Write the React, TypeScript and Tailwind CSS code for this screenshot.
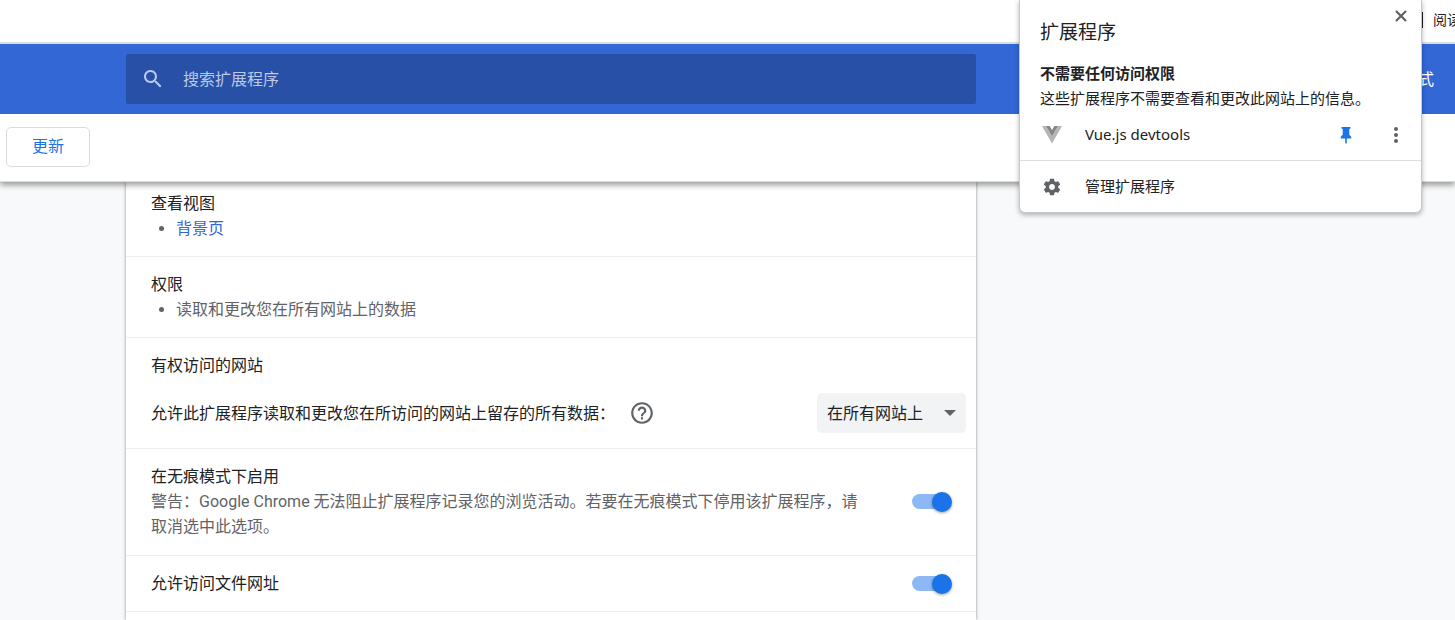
import { useState } from "react";
import type { ReactNode } from "react";

interface SectionProps {
  title?: string;
  children?: ReactNode;
  className?: string;
}
function Section(props: SectionProps) {
  return (
    <section className={`border-b border-[#eeeeee] px-[25px] pb-[15px] ${props.className ?? "pt-[15px]"}`}>
      {props.title && <h2 className="text-[#202124]">{props.title}</h2>}
      {props.children}
    </section>
  );
}

interface ToggleProps {
  id: string;
  checked: boolean;
  onChange: (value: boolean) => void;
}
function Toggle(props: ToggleProps) {
  return (
    <input
      id={props.id}
      type="checkbox"
      checked={props.checked}
      onChange={(e) => props.onChange(e.target.checked)}
      className="relative h-5 w-10 shrink-0 cursor-pointer appearance-none before:absolute before:top-[2px] before:left-0 before:h-[15px] before:w-9 before:rounded-full before:bg-[#bdc1c6] checked:before:bg-[#8cb8f5] after:absolute after:top-0 after:left-0 after:size-5 after:rounded-full after:bg-white after:shadow-[0_1px_3px_rgba(0,0,0,0.4)] checked:after:left-5 checked:after:bg-[#1a73e8]"
    />
  );
}

function VueIcon() {
  return (
    <svg className="h-5 w-5" viewBox="0 0 20 20" aria-hidden="true">
      <path d="M0 1h4l6 10.300L16 1h4L10 18.500z" fill="#b5b5b5" />
      <path d="M4 1h3.700L10 5l2.300-4H16l-6 10.300z" fill="#878787" />
    </svg>
  );
}

function PinIcon() {
  return (
    <svg className="h-5 w-5" viewBox="0 0 20 20" fill="#1a73e8" aria-hidden="true">
      <path d="M5.500 2h9v1.700h-1.200v6l1.900 2v1.800h-4.400v4.300L10 19l-.800-1.200v-4.300H4.800v-1.800l1.900-2v-6H5.500z" />
    </svg>
  );
}

function MoreIcon() {
  return (
    <svg className="h-5 w-5" viewBox="0 0 20 20" fill="#5f6368" aria-hidden="true">
      <circle cx="10" cy="4" r="2" />
      <circle cx="10" cy="10" r="2" />
      <circle cx="10" cy="16" r="2" />
    </svg>
  );
}

function GearIcon() {
  return (
    <svg className="h-5 w-5" viewBox="0 0 24 24" fill="#5f6368" aria-hidden="true">
      <path d="M19.430 12.980c.04-.32.07-.64.07-.98s-.03-.66-.07-.98l2.110-1.650c.19-.15.24-.42.12-.64l-2-3.460c-.12-.22-.39-.3-.61-.22l-2.490 1c-.52-.4-1.080-.73-1.690-.98l-.38-2.650C14.460 2.180 14.250 2 14 2h-4c-.25 0-.46.18-.49.42l-.38 2.650c-.61.25-1.170.59-1.690.98l-2.490-1c-.23-.09-.49 0-.61.22l-2 3.460c-.13.22-.07.49.12.64l2.110 1.650c-.04.32-.07.65-.07.98s.03.66.07.98l-2.110 1.650c-.19.15-.24.42-.12.64l2 3.460c.12.22.39.3.61.22l2.490-1c.52.4 1.080.73 1.690.98l.38 2.650c.03.24.24.42.49.42h4c.25 0 .46-.18.49-.42l.38-2.650c.61-.25 1.170-.59 1.690-.98l2.490 1c.23.09.49 0 .61-.22l2-3.460c.12-.22.07-.49-.12-.64l-2.110-1.650zM12 15.500c-1.930 0-3.500-1.570-3.500-3.500s1.570-3.500 3.500-3.500 3.500 1.570 3.500 3.500-1.570 3.500-3.500 3.500z" />
    </svg>
  );
}

function ExtensionsPopup() {
  const [open, setOpen] = useState(true);
  const [pinned, setPinned] = useState(true);
  if (!open) return null;
  return (
    <div
      role="dialog"
      aria-labelledby="popup-title"
      className="absolute top-0 right-[33px] w-[403px] rounded-b-md border border-t-0 border-[#c8c8c8] bg-white font-['Noto_Sans','Noto_Sans_CJK_SC',sans-serif] text-[15px] leading-[25px] text-[#202124] shadow-[0_2px_5px_rgba(0,0,0,0.3)]"
    >
      <button
        type="button"
        aria-label="关闭"
        onClick={() => setOpen(false)}
        className="absolute top-[6px] right-[10px] flex size-5 cursor-pointer items-center justify-center"
      >
        <svg className="size-3" viewBox="0 0 12 12" stroke="#5f6368" strokeWidth="2.200" aria-hidden="true">
          <path d="M1 1l10 10M11 1L1 11" />
        </svg>
      </button>
      <div className="px-5 pt-5">
        <h1 id="popup-title" className="text-[19px]">扩展程序</h1>
        <h2 className="mt-4 font-bold">不需要任何访问权限</h2>
        <p>这些扩展程序不需要查看和更改此网站上的信息。</p>
      </div>
      <div className="flex h-[49px] items-center pr-[15px] pb-[2px] pl-[22px]">
        <button type="button" className="flex flex-1 cursor-pointer items-center gap-[23px] text-left">
          <VueIcon />
          Vue.js devtools
        </button>
        <button type="button" aria-label="固定" aria-pressed={pinned} onClick={() => setPinned(!pinned)} className="cursor-pointer">
          <PinIcon />
        </button>
        <button type="button" aria-label="更多操作" className="ml-[30px] cursor-pointer">
          <MoreIcon />
        </button>
      </div>
      <button
        type="button"
        className="flex h-[52px] w-full cursor-pointer items-center gap-[23px] border-t border-[#dadce0] pl-[22px] text-left"
      >
        <GearIcon />
        管理扩展程序
      </button>
    </div>
  );
}

export default function App() {
  const [search, setSearch] = useState("");
  const [incognito, setIncognito] = useState(true);
  const [fileAccess, setFileAccess] = useState(true);
  return (
    <div className="relative flex h-screen flex-col overflow-hidden bg-[#f8f9fa] font-[Roboto,'Noto_Sans_CJK_SC',sans-serif] text-base leading-[25px] text-[#5f6368]">
      <div className="flex h-11 shrink-0 items-center justify-end border-b-2 border-[#dadce0] bg-white pb-[2px] text-sm text-[#202124]">
        <span className="h-4 w-0.5 bg-[#202124]"></span>
        <span className="ml-[10px] w-[22px] whitespace-nowrap">阅读</span>
      </div>

      <header className="z-10 flex h-[70px] shrink-0 items-center justify-between bg-[#3367d6] pr-[21px] pl-[126px]">
        <div className="flex h-[50px] w-full max-w-[850px] items-center rounded-xs bg-[#2850a7] pl-[15px]">
          <svg className="size-6 shrink-0 text-[#bccae8]" viewBox="0 0 24 24" fill="currentColor" aria-hidden="true">
            <path d="M15.500 14h-.79l-.28-.27C15.410 12.590 16 11.110 16 9.500 16 5.910 13.090 3 9.500 3S3 5.910 3 9.500 5.910 16 9.500 16c1.610 0 3.090-.59 4.230-1.570l.27.28v.79l5 4.990L20.490 19l-4.990-5zm-6 0C7.010 14 5 11.990 5 9.500S7.010 5 9.500 5 14 7.010 14 9.500 11.990 14 9.500 14z" />
          </svg>
          <input
            type="search"
            aria-label="搜索扩展程序"
            placeholder="搜索扩展程序"
            value={search}
            onChange={(e) => setSearch(e.target.value)}
            className="ml-[18px] flex-1 bg-transparent text-white outline-none placeholder:text-[#bccae8]"
          />
        </div>
        <span className="text-white">式</span>
      </header>

      <div className="z-[5] flex h-[68px] shrink-0 items-start border-b border-[#dadce0] bg-white px-[6px] pt-[13px] shadow-[0_3px_6px_rgba(0,0,0,0.4)]">
        <button type="button" className="h-10 w-[84px] cursor-pointer rounded-[5px] border border-[#dadce0] pb-[2px] text-[#1a73e8]">
          更新
        </button>
      </div>

      <main className="flex min-h-0 flex-1 flex-col pl-[126px]">
        <div className="w-full max-w-[850px] flex-1 bg-white shadow-[0_0_3px_rgba(0,0,0,0.45)]">
          <Section title="查看视图" className="pt-[9px]">
            <ul className="list-disc pl-[25px]">
              <li>
                <a href="#background" className="text-[#3367d6]">背景页</a>
              </li>
            </ul>
          </Section>
          <Section title="权限">
            <ul className="list-disc pl-[25px]">
              <li>读取和更改您在所有网站上的数据</li>
            </ul>
          </Section>
          <Section title="有权访问的网站">
            <div className="-mr-[15px] mt-[15px] flex h-10 items-center text-[#202124]">
              <label htmlFor="host-access">允许此扩展程序读取和更改您在所访问的网站上留存的所有数据：</label>
              <a href="#help" aria-label="了解详情" className="ml-[14px]">
                <svg className="size-[26px]" viewBox="0 0 24 24" fill="#5f6368" aria-hidden="true">
                  <path d="M11 18h2v-2h-2v2zm1-16C6.480 2 2 6.480 2 12s4.480 10 10 10 10-4.480 10-10S17.520 2 12 2zm0 18c-4.410 0-8-3.590-8-8s3.590-8 8-8 8 3.590 8 8-3.590 8-8 8zm0-14c-2.210 0-4 1.790-4 4h2c0-1.100.9-2 2-2s2 .9 2 2c0 2-3 1.750-3 5h2c0-2.250 3-2.500 3-5 0-2.210-1.790-4-4-4z" />
                </svg>
              </a>
              <div className="relative ml-auto">
                <select id="host-access" className="h-10 w-[149px] cursor-pointer appearance-none rounded-[5px] bg-[#f1f3f4] pl-[10px]">
                  <option>在所有网站上</option>
                </select>
                <svg className="pointer-events-none absolute top-[17px] right-[10px] h-[6px] w-3" viewBox="0 0 12 6" fill="#5f6368" aria-hidden="true">
                  <path d="M0 0h12L6 6z" />
                </svg>
              </div>
            </div>
          </Section>
          <Section>
            <div className="-mr-px flex min-h-[76px] items-center justify-between">
              <label htmlFor="incognito" className="max-w-[720px] self-start">
                <span className="block text-[#202124]">在无痕模式下启用</span>
                警告：Google Chrome 无法阻止扩展程序记录您的浏览活动。若要在无痕模式下停用该扩展程序，请取消选中此选项。
              </label>
              <Toggle id="incognito" checked={incognito} onChange={setIncognito} />
            </div>
          </Section>
          <Section>
            <div className="-mr-px flex items-center justify-between">
              <label htmlFor="file-access" className="text-[#202124]">允许访问文件网址</label>
              <Toggle id="file-access" checked={fileAccess} onChange={setFileAccess} />
            </div>
          </Section>
        </div>
      </main>

      <div className="absolute inset-x-0 top-0 z-20">
        <ExtensionsPopup />
      </div>
    </div>
  );
}
